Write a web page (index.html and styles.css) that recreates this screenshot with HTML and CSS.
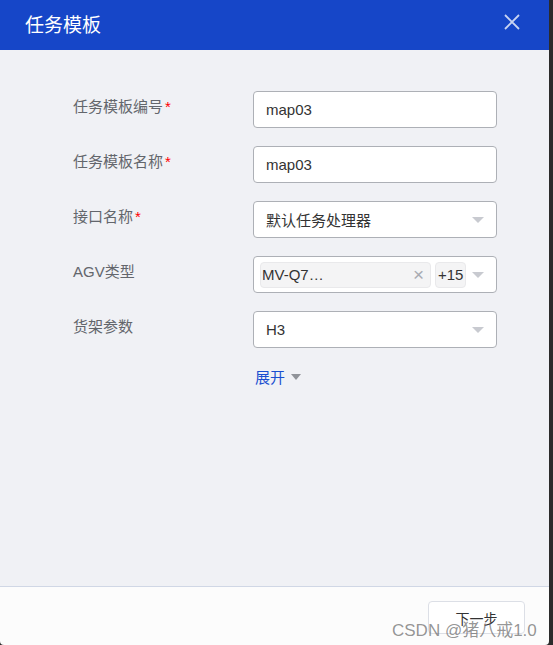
FILE: index.html
```html
<!DOCTYPE html>
<html lang="zh">
<head>
    <meta charset="UTF-8">
    <meta name="viewport" content="width=device-width, initial-scale=1.0">
    <title>任务模板</title>
    <link rel="stylesheet" href="styles.css">
</head>
<body>

<div class="dialog">
    <header class="dialog-header">
        <span class="dialog-title">任务模板</span>
        <svg class="dialog-close" width="18" height="18" viewBox="0 0 18 18">
            <path d="M2 2 L16 16 M16 2 L2 16" stroke="#c9d4f2" stroke-width="1.8" fill="none"/>
        </svg>
    </header>

    <div class="dialog-body">
        <div class="form-row">
            <label class="form-label">任务模板编号<span class="req">*</span></label>
            <div class="form-input">map03</div>
        </div>
        <div class="form-row">
            <label class="form-label">任务模板名称<span class="req">*</span></label>
            <div class="form-input">map03</div>
        </div>
        <div class="form-row">
            <label class="form-label">接口名称<span class="req">*</span></label>
            <div class="form-input select">默认任务处理器<i class="arrow"></i></div>
        </div>
        <div class="form-row">
            <label class="form-label">AGV类型</label>
            <div class="form-input select multi">
                <span class="tag tag-main">MV-Q7…<span class="tag-close">×</span></span>
                <span class="tag tag-more">+15</span>
                <i class="arrow"></i>
            </div>
        </div>
        <div class="form-row">
            <label class="form-label">货架参数</label>
            <div class="form-input select">H3<i class="arrow"></i></div>
        </div>
        <div class="expand">展开 <i class="arrow dark"></i></div>
    </div>

    <footer class="dialog-footer">
        <button class="btn">下一步</button>
    </footer>
</div>

<div class="watermark">CSDN @猪八戒1.0</div>

</body>
</html>
```

FILE: styles.css
```css
body {
    margin: 0;
    padding: 0;
    background: #2b2b2b;
    font-family: "Liberation Sans", Arial, "Noto Sans CJK SC", sans-serif;
    width: 553px;
    height: 645px;
    overflow: hidden;
    position: relative;
}

.dialog {
    width: 549px;
    height: 645px;
    display: flex;
    flex-direction: column;
    border-radius: 0 0 4px 4px;
    overflow: hidden;
}

.dialog-header {
    height: 50px;
    background: #1646c8;
    display: flex;
    align-items: center;
    justify-content: space-between;
    padding: 0 28px 0 25px;
    flex-shrink: 0;
}

.dialog-title {
    color: #fff;
    font-size: 19px;
    margin-top: -4px;
}

.dialog-close {
    margin-top: -6px;
}

.dialog-body {
    flex: 1;
    background: #f0f1f5;
    padding: 41px 0 0 73px;
}

.form-row {
    display: flex;
    align-items: center;
    margin-bottom: 18px;
}

.form-label {
    width: 180px;
    font-size: 15px;
    color: #63666c;
    margin-top: -8px;
}

.req {
    color: #f00;
    margin-left: 2px;
}

.form-input {
    width: 244px;
    height: 37px;
    box-sizing: border-box;
    background: #fff;
    border: 1px solid #adb0b6;
    border-radius: 4px;
    padding: 0 12px;
    display: flex;
    align-items: center;
    font-size: 15px;
    color: #333;
    position: relative;
}

.form-input.multi {
    padding: 0 6px;
    gap: 4px;
}

.arrow {
    position: absolute;
    right: 12px;
    top: 15px;
    width: 0;
    height: 0;
    border-left: 6px solid transparent;
    border-right: 6px solid transparent;
    border-top: 6px solid #c8cad0;
}

.tag {
    height: 26px;
    box-sizing: border-box;
    background: #f4f4f5;
    border: 1px solid #e9e9eb;
    border-radius: 4px;
    display: flex;
    align-items: center;
    font-size: 15px;
    color: #333;
}

.tag-main {
    width: 171px;
    padding: 0 6px 0 1px;
    justify-content: space-between;
}

.tag-close {
    color: #a8abb2;
    font-size: 19px;
    line-height: 1;
}

.tag-more {
    padding: 0 2px;
}

.expand {
    margin: 0 0 0 182px;
    font-size: 15px;
    color: #1a4fd0;
    display: flex;
    align-items: center;
    gap: 6px;
}

.arrow.dark {
    position: static;
    border-left-width: 5px;
    border-right-width: 5px;
    border-top-color: #909399;
}

.dialog-footer {
    height: 59px;
    background: #fcfcfc;
    border-top: 1px solid #d0d7e5;
    display: flex;
    justify-content: flex-end;
    padding: 14px 24px 0 0;
    box-sizing: border-box;
    flex-shrink: 0;
}

.btn {
    width: 97px;
    height: 33px;
    background: #fff;
    border: 1px solid #dcdfe6;
    border-radius: 4px;
    font-family: inherit;
    font-size: 14px;
    color: #333;
}

.watermark {
    position: absolute;
    left: 392px;
    top: 616px;
    font-size: 17px;
    color: rgba(90, 90, 90, 0.65);
}
```
